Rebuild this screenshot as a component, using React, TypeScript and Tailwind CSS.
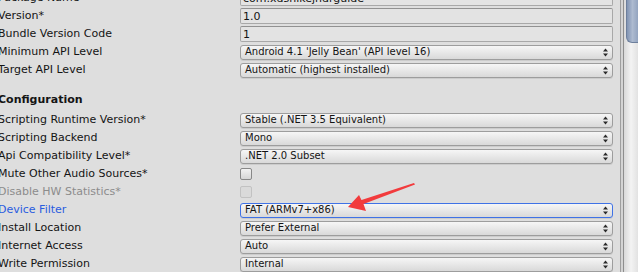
import React from "react";

function Arrows() {
  return (
    <svg width="5" height="9" viewBox="0 0 5 9" className="shrink-0">
      <polygon points="0,3.5 2.5,0.5 5,3.5" fill="#2a2a2a" />
      <polygon points="0,5.5 2.5,8.5 5,5.5" fill="#2a2a2a" />
    </svg>
  );
}

function Row({
  label,
  labelClass = "",
  children,
}: {
  label: string;
  labelClass?: string;
  children?: React.ReactNode;
}) {
  return (
    <div className="flex items-center h-[18px] shrink-0">
      <div className={`w-[242px] -ml-[2px] shrink-0 whitespace-nowrap leading-[18px] ${labelClass}`}>
        {label}
      </div>
      <div className="w-[373px] shrink-0 flex items-center">{children}</div>
    </div>
  );
}

function TextField({ value }: { value: string }) {
  return (
    <div className="w-full h-[16px] border border-[#a8a8a8] border-t-[#919191] bg-[#e3e3e3] rounded-[2px] px-[2px] flex items-center leading-none whitespace-nowrap overflow-hidden">
      {value}
    </div>
  );
}

function Dropdown({ value, focused = false }: { value: string; focused?: boolean }) {
  return (
    <div
      className={`w-full h-[15px] border rounded-[3px] bg-gradient-to-b from-[#f6f6f6] to-[#d9d9d9] pl-[4px] pr-[4px] flex items-center justify-between text-[10px] leading-none whitespace-nowrap shadow-[0_1px_0_rgba(0,0,0,0.08)] ${
        focused ? "border-[#3f72e6]" : "border-[#9d9d9d]"
      }`}
    >
      <span>{value}</span>
      <Arrows />
    </div>
  );
}

function Checkbox({ disabled = false }: { disabled?: boolean }) {
  return (
    <div
      className={`w-[12px] h-[12px] rounded-[2px] border ${
        disabled
          ? "border-[#c2c2c2] bg-[#dadada]"
          : "border-[#888888] bg-gradient-to-b from-[#f2f2f2] to-[#d6d6d6]"
      }`}
    />
  );
}

export default function App() {
  return (
    <div className="relative w-[638px] h-[272px] overflow-hidden flex bg-[#dedede] text-[11px] text-[#141414] font-['DejaVu_Sans',sans-serif]">
      <div className="w-[620px] shrink-0 overflow-hidden">
        <div className="flex flex-col -mt-[11px]">
          <Row label="Package Name">
            <TextField value="com.xdshikejhdrguide" />
          </Row>
          <Row label="Version*">
            <TextField value="1.0" />
          </Row>
          <Row label="Bundle Version Code">
            <TextField value="1" />
          </Row>
          <Row label="Minimum API Level">
            <Dropdown value="Android 4.1 'Jelly Bean' (API level 16)" />
          </Row>
          <Row label="Target API Level">
            <Dropdown value="Automatic (highest installed)" />
          </Row>
          <div className="h-[12px] shrink-0" />
          <div className="h-[18px] shrink-0 -ml-[2px] font-bold leading-[18px] flex items-center">
            Configuration
          </div>
          <div className="h-[2px] shrink-0" />
          <Row label="Scripting Runtime Version*">
            <Dropdown value="Stable (.NET 3.5 Equivalent)" />
          </Row>
          <Row label="Scripting Backend">
            <Dropdown value="Mono" />
          </Row>
          <Row label="Api Compatibility Level*">
            <Dropdown value=".NET 2.0 Subset" />
          </Row>
          <Row label="Mute Other Audio Sources*">
            <Checkbox />
          </Row>
          <Row label="Disable HW Statistics*" labelClass="text-[#8c8c8c]">
            <Checkbox disabled />
          </Row>
          <Row label="Device Filter" labelClass="text-[#2a5ce0]">
            <Dropdown value="FAT (ARMv7+x86)" focused />
          </Row>
          <Row label="Install Location">
            <Dropdown value="Prefer External" />
          </Row>
          <Row label="Internet Access">
            <Dropdown value="Auto" />
          </Row>
          <Row label="Write Permission">
            <Dropdown value="Internal" />
          </Row>
        </div>
      </div>
      <div className="w-px shrink-0 bg-[#9f9f9f]" />
      <div className="w-[2px] shrink-0 bg-[#d4d4d4]" />
      <div className="w-px shrink-0 bg-[#8e8e8e]" />
      <div className="w-[14px] shrink-0 flex flex-col bg-gradient-to-r from-[#d9d9d9] via-[#f3f3f3] to-[#e2e2e2]">
        <div className="h-[43px] ml-[2px] shrink-0 rounded-bl-[6px] border border-r-0 border-t-0 border-[#6d7f9c] bg-gradient-to-r from-[#8194b3] via-[#aebbd0] to-[#93a4bf]" />
      </div>
      <svg
        className="absolute left-0 top-0 pointer-events-none"
        width="638"
        height="272"
        viewBox="0 0 638 272"
      >
        <polygon
          points="348,207 359,195 361.5,200 414,183 415,184.5 363.5,204 366,211"
          fill="#f23b3d"
        />
      </svg>
    </div>
  );
}
